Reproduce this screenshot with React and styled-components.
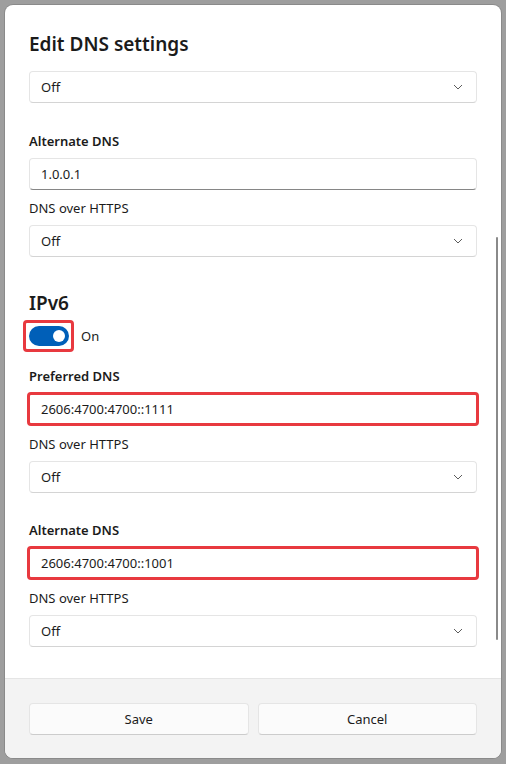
import styled, { createGlobalStyle } from "styled-components";

const GlobalStyle = createGlobalStyle`
  html, body {
    margin: 0;
    padding: 0;
    background: #9e9e9e;
  }
  body {
    font-family: "Segoe UI", "Noto Sans", sans-serif;
    color: #1b1b1b;
  }
`

const Backdrop = styled.div`
  height: 764px;
  padding: 5px;
  box-sizing: border-box;
  background: #9e9e9e;
`

const Dialog = styled.div`
  position: relative;
  height: 753px;
  background: #ffffff;
  border-radius: 8px;
  overflow: hidden;
  display: flex;
  flex-direction: column;
  box-shadow: 0 0 0 1px rgba(0, 0, 0, 0.12);
`

const Body = styled.div`
  flex: 1;
  padding: 25px 24px 0 24px;
  display: flex;
  flex-direction: column;
`

const Title = styled.h2`
  margin: 0;
  font-size: 19px;
  font-weight: 600;
  line-height: 28px;
  margin-bottom: ${props => props.$after || 0}px;
  margin-top: ${props => props.$before || 0}px;
`

const Label = styled.div`
  font-size: 13px;
  line-height: 20px;
  font-weight: ${props => (props.$bold ? 600 : 400)};
  margin-top: ${props => props.$before || 0}px;
  margin-bottom: ${props => props.$after || 7}px;
`

const Field = styled.div`
  height: ${props => (props.$highlight ? 34 : 32)}px;
  box-sizing: border-box;
  margin: 0 ${props => (props.$highlight ? -2 : 0)}px;
  padding: 0 13px 0 11px;
  display: flex;
  align-items: center;
  justify-content: space-between;
  font-size: 13px;
  background: #ffffff;
  border-radius: 4px;
  border: ${props => (props.$highlight ? "3px solid #e8393f" : "1px solid #e5e5e5")};
  border-bottom-color: ${props =>
    props.$highlight ? "#e8393f" : props.$input ? "#868686" : "#d4d4d4"};
`

const Chevron = () => (
  <svg width="10" height="6" viewBox="0 0 10 6">
    <path d="M1 1l4 4 4-4" fill="none" stroke="#5c5c5c" strokeWidth="1" />
  </svg>
)

const ToggleRow = styled.div`
  display: flex;
  align-items: center;
  gap: 7px;
  margin-top: 3px;
  margin-left: -6px;
  font-size: 13px;
`

const ToggleFrame = styled.div`
  width: 51px;
  height: 32px;
  box-sizing: border-box;
  border: 3px solid #e8393f;
  border-radius: 4px;
  display: flex;
  align-items: center;
  padding-left: 3px;
`

const Track = styled.div`
  width: 40px;
  height: 20px;
  border-radius: 10px;
  background: #005fb8;
  display: flex;
  align-items: center;
  justify-content: flex-end;
  padding-right: 4px;
  box-sizing: border-box;
`

const Knob = styled.div`
  width: 12px;
  height: 12px;
  border-radius: 50%;
  background: #ffffff;
`

const Scrollbar = styled.div`
  position: absolute;
  right: 3px;
  top: 232px;
  width: 2px;
  height: 403px;
  border-radius: 1px;
  background: #8a8a8a;
`

const Footer = styled.div`
  height: 80px;
  box-sizing: border-box;
  background: #f3f3f3;
  border-top: 1px solid #e5e5e5;
  padding: 24px 24px 0 24px;
  display: grid;
  grid-template-columns: 1fr 1fr;
  gap: 9px;
  align-items: start;
`

const Button = styled.button`
  height: 32px;
  font-family: inherit;
  font-size: 13px;
  color: #1b1b1b;
  background: #fbfbfb;
  border: 1px solid #e5e5e5;
  border-bottom-color: #cccccc;
  border-radius: 4px;
`

function Select({ value }) {
  return (
    <Field>
      <span>{value}</span>
      <Chevron />
    </Field>
  )
}

export default function App() {
  return (
    <>
      <GlobalStyle />
      <Backdrop>
        <Dialog>
          <Body>
            <Title $after={13}>Edit DNS settings</Title>
            <Select value="Off" />

            <Label $bold $before={28}>Alternate DNS</Label>
            <Field $input>1.0.0.1</Field>
            <Label $before={8}>DNS over HTTPS</Label>
            <Select value="Off" />

            <Title $before={32}>IPv6</Title>
            <ToggleRow>
              <ToggleFrame>
                <Track>
                  <Knob />
                </Track>
              </ToggleFrame>
              <span>On</span>
            </ToggleRow>

            <Label $bold $before={14} $after={6}>Preferred DNS</Label>
            <Field $highlight>2606:4700:4700::1111</Field>
            <Label $before={8}>DNS over HTTPS</Label>
            <Select value="Off" />

            <Label $bold $before={27} $after={6}>Alternate DNS</Label>
            <Field $highlight>2606:4700:4700::1001</Field>
            <Label $before={8}>DNS over HTTPS</Label>
            <Select value="Off" />
          </Body>
          <Scrollbar />
          <Footer>
            <Button>Save</Button>
            <Button>Cancel</Button>
          </Footer>
        </Dialog>
      </Backdrop>
    </>
  )
}
